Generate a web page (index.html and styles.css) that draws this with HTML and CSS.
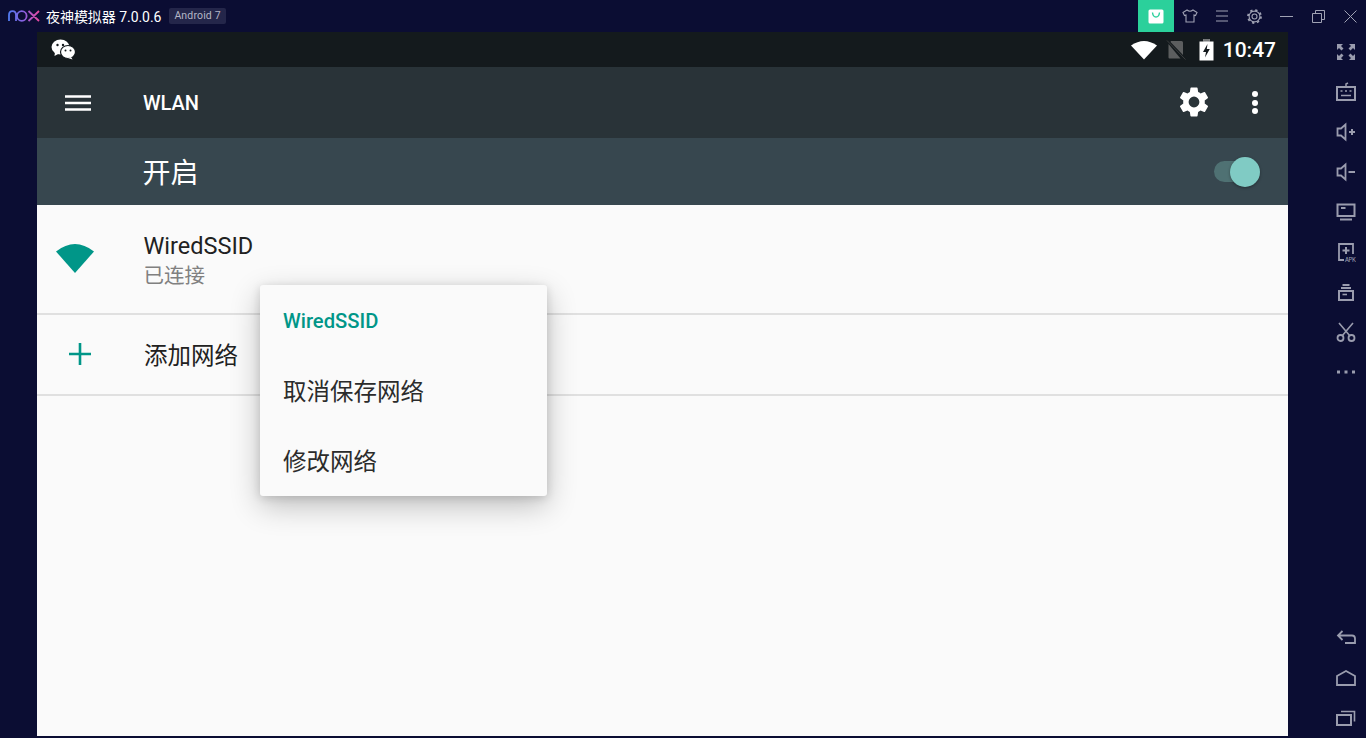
FILE: index.html

```html
<!DOCTYPE html>
<html>
<head>
    <title>夜神模拟器</title>
    <link rel="stylesheet" href="styles.css">
</head>
<body>
    <header class="titlebar">
        <div class="brand">
            <svg class="nox-logo" width="32" height="12" viewBox="0 0 32 12">
                <defs>
                    <linearGradient id="noxGrad" gradientUnits="userSpaceOnUse" x1="0" y1="0" x2="32" y2="0">
                        <stop offset="0" stop-color="#4f7bf0"/>
                        <stop offset="0.5" stop-color="#8a5fe0"/>
                        <stop offset="1" stop-color="#f0479c"/>
                    </linearGradient>
                </defs>
                <path d="M1 11V5Q1 1.200 4.500 1.200T8 5V11M13.800 1.200A4.800 4.800 0 1 1 13.800 10.800A4.800 4.800 0 1 1 13.800 1.200M20.500 1L31 11M31 1L20.500 11" fill="none" stroke="url(#noxGrad)" stroke-width="1.800"/>
            </svg>
            <span class="app-title">夜神模拟器 7.0.0.6</span>
            <span class="version-tag">Android 7</span>
        </div>
        <div class="window-tools">
            <div class="tool tool-shop">
                <svg width="16" height="15" viewBox="0 0 16 15"><rect x="0.500" y="0.500" width="15" height="14" rx="1.500" fill="#fff"/><path d="M4.500 3.500Q5 8 8 8T11.500 3.500" fill="none" stroke="#2bd09b" stroke-width="1.400"/></svg>
            </div>
            <div class="tool">
                <svg width="16" height="14" viewBox="0 0 16 14"><path d="M5 1L1 3.500L2.500 6.500L4 6V13H12V6L13.500 6.500L15 3.500L11 1Q8 3.500 5 1Z" fill="none" stroke="#a0a2b4" stroke-width="1.100"/></svg>
            </div>
            <div class="tool">
                <svg width="14" height="12" viewBox="0 0 14 12"><path d="M1 1H13M1 6H13M1 11H13" stroke="#a0a2b4" stroke-width="1"/></svg>
            </div>
            <div class="tool">
                <svg width="15" height="15" viewBox="0 0 15 15"><circle cx="7.500" cy="7.500" r="5.400" fill="none" stroke="#a0a2b4" stroke-width="1.100"/><circle cx="7.500" cy="7.500" r="6.500" fill="none" stroke="#a0a2b4" stroke-width="1.800" stroke-dasharray="2.300 2.800"/><circle cx="7.500" cy="7.500" r="2.500" fill="none" stroke="#a0a2b4" stroke-width="1.100"/></svg>
            </div>
            <div class="tool">
                <svg width="13" height="13" viewBox="0 0 13 13"><path d="M0 6.500H13" stroke="#a0a2b4" stroke-width="1"/></svg>
            </div>
            <div class="tool">
                <svg width="13" height="13" viewBox="0 0 13 13"><path d="M0.500 3.500H9.500V12.500H0.500ZM3.500 3.500V0.500H12.500V9.500H9.500" fill="none" stroke="#a0a2b4" stroke-width="1"/></svg>
            </div>
            <div class="tool">
                <svg width="13" height="13" viewBox="0 0 13 13"><path d="M0.500 0.500L12.500 12.500M12.500 0.500L0.500 12.500" stroke="#a0a2b4" stroke-width="1"/></svg>
            </div>
        </div>
    </header>

    <div class="workspace">
        <main class="screen">
            <div class="statusbar">
                <svg class="wechat" width="25" height="21" viewBox="0 0 25 21">
                    <ellipse cx="9.500" cy="8" rx="9" ry="7.500" fill="#fff"/>
                    <path d="M4 13L3.500 17L8 14.500Z" fill="#fff"/>
                    <ellipse cx="17" cy="13" rx="7.500" ry="6.500" fill="#fff" stroke="#141a1d" stroke-width="1.200"/>
                    <path d="M20 18L21.500 20.500L17 19Z" fill="#fff"/>
                    <circle cx="6.500" cy="6" r="1.200" fill="#141a1d"/>
                    <circle cx="12" cy="6" r="1.200" fill="#141a1d"/>
                    <circle cx="14.500" cy="11.500" r="1" fill="#141a1d"/>
                    <circle cx="19.500" cy="11.500" r="1" fill="#141a1d"/>
                </svg>
                <div class="status-right">
                    <svg class="wifi-status" width="26" height="20" viewBox="0 0 26 20"><path d="M0 5.500Q13 -3.500 26 5.500L13 19.500Z" fill="#fff"/></svg>
                    <svg class="no-sim" width="20" height="20" viewBox="0 0 20 20"><path d="M5 1H15.500Q17 1 17 2.500V15L4.500 2Z M2.500 4L14.500 18.500H3.500Q2.500 18.500 2.500 17.500Z" fill="#5c5e5f"/><path d="M1 0.500L19.500 19.500" stroke="#3a3d3e" stroke-width="1"/></svg>
                    <svg class="battery" width="15" height="22" viewBox="0 0 15 22"><path d="M4.500 0H10.500V2.500H14.500V21.500H0.500V2.500H4.500Z" fill="#fff"/><path d="M4.500 0H10.500V2.500H4.500Z" fill="#77797a"/><path d="M8.500 5L4 13H7L6 18.500L10.800 10H7.800Z" fill="#141a1d"/></svg>
                    <span class="clock">10:47</span>
                </div>
            </div>

            <div class="appbar">
                <svg class="menu-icon" width="28" height="18" viewBox="0 0 28 18"><path d="M1 2.500H27M1 9H27M1 15.500H27" stroke="#fff" stroke-width="2.600"/></svg>
                <span class="appbar-title">WLAN</span>
                <svg class="gear" width="36" height="36" viewBox="0 0 24 24"><path fill="#fff" d="M19.140 12.940c.04-.3.060-.61.060-.94 0-.32-.02-.64-.07-.94l2.030-1.580a.49.49 0 0 0 .12-.61l-1.920-3.320a.49.49 0 0 0-.59-.22l-2.390.96a7.030 7.030 0 0 0-1.620-.94l-.36-2.540a.48.48 0 0 0-.48-.41h-3.840a.48.48 0 0 0-.47.41l-.36 2.540c-.59.24-1.130.57-1.620.94l-2.390-.96a.49.49 0 0 0-.59.22L2.740 8.870a.48.48 0 0 0 .12.61l2.030 1.580c-.05.3-.09.63-.09.94s.02.64.07.94l-2.030 1.580a.49.49 0 0 0-.12.61l1.920 3.320c.12.22.37.29.59.22l2.390-.96c.5.38 1.030.7 1.620.94l.36 2.540c.05.24.24.41.48.41h3.840c.24 0 .44-.17.47-.41l.36-2.540c.59-.24 1.130-.56 1.620-.94l2.390.96c.22.08.47 0 .59-.22l1.920-3.320a.48.48 0 0 0-.12-.61l-2.010-1.580zM12 15.600A3.600 3.600 0 1 1 12 8.400a3.600 3.600 0 0 1 0 7.200z"/></svg>
                <span class="more-dots"><i></i><i></i><i></i></span>
            </div>

            <div class="switchbar">
                <span class="switch-label">开启</span>
                <span class="switch"><span class="switch-knob"></span></span>
            </div>

            <section class="wifi-list">
                <div class="wifi-row row-connected">
                    <span class="row-icon">
                        <svg width="38" height="29" viewBox="0 0 38 29"><path d="M0 7.500Q19 -7.500 38 7.500L19 29Z" fill="#009688"/></svg>
                    </span>
                    <div class="row-text">
                        <div class="row-name">WiredSSID</div>
                        <div class="row-sub">已连接</div>
                    </div>
                </div>
                <div class="wifi-row row-add">
                    <span class="row-icon">
                        <svg width="22" height="22" viewBox="0 0 22 22"><path d="M11 0V22M0 11H22" stroke="#009688" stroke-width="2.600"/></svg>
                    </span>
                    <div class="row-name">添加网络</div>
                </div>
            </section>

            <div class="context-menu">
                <div class="menu-head">WiredSSID</div>
                <div class="menu-item">取消保存网络</div>
                <div class="menu-item">修改网络</div>
            </div>
        </main>

        <aside class="siderail">
            <svg class="rail-icon" viewBox="0 0 20 20"><path d="M1 2H7L5 4L7.500 6.500L5.500 8.500L3 6L1 8ZM19 2H13L15 4L12.500 6.500L14.500 8.500L17 6L19 8ZM1 18H7L5 16L7.500 13.500L5.500 11.500L3 14L1 12ZM19 18H13L15 16L12.500 13.500L14.500 11.500L17 14L19 12Z" fill="#9a9cae"/></svg>
            <svg class="rail-icon" viewBox="0 0 20 20"><path d="M1 5H19V18H1Z" fill="none" stroke="#9a9cae" stroke-width="2"/><path d="M4.500 9H6.500M9 9H11M13.500 9H15.500M5 13.500H15M10 5V2L12 1" fill="none" stroke="#9a9cae" stroke-width="1.500"/></svg>
            <svg class="rail-icon" viewBox="0 0 20 20"><path d="M1.500 6.500H5L9.500 2.500V17.500L5 13.500H1.500Z" fill="none" stroke="#9a9cae" stroke-width="1.800"/><path d="M13 10H19M16 7V13" stroke="#9a9cae" stroke-width="2"/></svg>
            <svg class="rail-icon" viewBox="0 0 20 20"><path d="M1.500 6.500H5L9.500 2.500V17.500L5 13.500H1.500Z" fill="none" stroke="#9a9cae" stroke-width="1.800"/><path d="M12.500 10H19" stroke="#9a9cae" stroke-width="2"/></svg>
            <svg class="rail-icon" viewBox="0 0 20 20"><path d="M1.500 2.500H18.500V14H1.500Z" fill="none" stroke="#9a9cae" stroke-width="2"/><path d="M5 6H9.500M4 17.500H16" stroke="#9a9cae" stroke-width="2"/></svg>
            <svg class="rail-icon" viewBox="0 0 20 20"><path d="M8 18H3V2H17V12" fill="none" stroke="#9a9cae" stroke-width="1.800"/><path d="M10 5V12M6.500 8.500H13.500" stroke="#9a9cae" stroke-width="2"/><text class="apk-label" x="9" y="19.500" textLength="11">APK</text></svg>
            <svg class="rail-icon" viewBox="0 0 20 20"><path d="M3 9H17V18H3ZM5 6H15M6.500 3H13.500" fill="none" stroke="#9a9cae" stroke-width="2"/><path d="M6.500 12.500H11" stroke="#9a9cae" stroke-width="1.600"/></svg>
            <svg class="rail-icon" viewBox="0 0 20 20"><path d="M3 1L14 14M17 1L6 14" stroke="#9a9cae" stroke-width="1.600"/><circle cx="4.500" cy="16" r="3" fill="none" stroke="#9a9cae" stroke-width="1.800"/><circle cx="15.500" cy="16" r="3" fill="none" stroke="#9a9cae" stroke-width="1.800"/></svg>
            <svg class="rail-icon" viewBox="0 0 20 20"><path d="M1 10H4M8.500 10H11.500M16 10H19" stroke="#9a9cae" stroke-width="3"/></svg>
            <div class="rail-spacer"></div>
            <svg class="rail-icon" viewBox="0 0 20 20"><path d="M6.500 3L2 7.500L6.500 12M2 7.500H16Q19 7.500 19 10.500V15H9" fill="none" stroke="#9a9cae" stroke-width="1.800"/></svg>
            <svg class="rail-icon" viewBox="0 0 20 20"><path d="M1 8L10 3L19 8V17H1Z" fill="none" stroke="#9a9cae" stroke-width="1.800"/></svg>
            <svg class="rail-icon" viewBox="0 0 20 20"><path d="M1 7H15V17H1Z" fill="none" stroke="#9a9cae" stroke-width="2"/><path d="M5 3.500H18.500V13.500" fill="none" stroke="#9a9cae" stroke-width="1.600"/></svg>
        </aside>
    </div>
</body>
</html>
```

FILE: styles.css

```css
* {
    box-sizing: border-box;
}

html, body {
    height: 100%;
}

body {
    margin: 0;
    height: 738px;
    overflow: hidden;
    background-color: #0b0d33;
    font-family: Roboto, "Noto Sans CJK SC", sans-serif;
    display: flex;
    flex-direction: column;
}

.titlebar {
    height: 32px;
    display: flex;
    justify-content: space-between;
    flex-shrink: 0;
}

.brand {
    display: flex;
    align-items: center;
    padding-left: 8px;
}

.nox-logo {
    margin-right: 6px;
}

.app-title {
    color: #fff;
    font-size: 14px;
    letter-spacing: -0.05px;
}

.version-tag {
    margin-left: 8px;
    padding: 0 5px;
    height: 16px;
    line-height: 16px;
    font-size: 10.500px;
    letter-spacing: 0.150px;
    color: #b4b6c6;
    background-color: #24264a;
    border-radius: 2px;
}

.window-tools {
    display: flex;
}

.tool {
    width: 32px;
    height: 32px;
    display: flex;
    align-items: center;
    justify-content: center;
}

.tool-shop {
    width: 36px;
    background-color: #2bd09b;
}

.workspace {
    flex: 1;
    display: flex;
    padding-left: 37px;
    min-height: 0;
}

.screen {
    position: relative;
    width: 1251px;
    height: 704px;
    background-color: #fafafa;
    display: flex;
    flex-direction: column;
}

.statusbar {
    height: 35px;
    background-color: #141a1d;
    display: flex;
    align-items: center;
    justify-content: space-between;
    padding: 0 12px 0 14px;
}

.status-right {
    display: flex;
    align-items: center;
}

.no-sim {
    margin-left: 9px;
}

.battery {
    margin-left: 13px;
}

.clock {
    margin-left: 9px;
    color: #fff;
    font-size: 21px;
    font-weight: 500;
    line-height: 24px;
}

.appbar {
    height: 71px;
    background-color: #293338;
    display: flex;
    align-items: center;
    padding: 0 30px 0 27px;
}

.appbar-title {
    flex: 1;
    margin-left: 51px;
    color: #fff;
    font-size: 20px;
    font-weight: 500;
}

.gear {
    margin-right: 40px;
    margin-bottom: 2px;
}

.more-dots {
    display: flex;
    flex-direction: column;
    gap: 2.500px;
}

.more-dots i {
    width: 6px;
    height: 6px;
    border-radius: 50%;
    background-color: #fff;
}

.switchbar {
    height: 67px;
    background-color: #37474f;
    display: flex;
    align-items: center;
    justify-content: space-between;
    padding: 0 28px 2px 105.500px;
}

.switch-label {
    color: #fff;
    font-size: 28px;
}

.switch {
    position: relative;
    width: 45px;
    height: 21px;
    border-radius: 11px;
    background-color: #4f7173;
    margin-right: 1px;
    margin-top: 2px;
}

.switch-knob {
    position: absolute;
    right: -1px;
    top: -4px;
    width: 30px;
    height: 30px;
    border-radius: 50%;
    background-color: #80cbc4;
    box-shadow: 0 1px 3px rgba(0, 0, 0, 0.35);
}

.wifi-row {
    display: flex;
    align-items: center;
    border-bottom: 2px solid #e0e0e0;
}

.row-connected {
    height: 110px;
}

.row-connected .row-icon {
    padding-bottom: 2px;
}

.row-connected .row-text {
    padding-top: 5px;
    margin-left: -0.500px;
}

.row-add {
    height: 81px;
}

.row-icon {
    width: 107px;
    flex-shrink: 0;
    display: flex;
    justify-content: center;
    padding-right: 32px;
}

.row-add .row-icon {
    padding-right: 22px;
    padding-bottom: 2px;
}

.row-name {
    font-size: 23.500px;
    line-height: 30px;
    color: #212121;
}

.row-add .row-name {
    padding-top: 2px;
}

.row-sub {
    font-size: 20.500px;
    line-height: 31px;
    color: #808080;
}

.context-menu {
    position: absolute;
    left: 223px;
    top: 253px;
    width: 287px;
    height: 211px;
    background-color: #fafafa;
    border-radius: 3px;
    box-shadow: 0 10px 30px rgba(0, 0, 0, 0.24), 0 2px 10px rgba(0, 0, 0, 0.14);
    padding: 1px 0 0 23px;
}

.menu-head {
    height: 71px;
    line-height: 71px;
    color: #009688;
    font-size: 20.200px;
    font-weight: 500;
}

.menu-item {
    height: 70px;
    line-height: 70px;
    font-size: 23.500px;
    color: #2b2b2b;
}

.siderail {
    width: 78px;
    height: 706px;
    display: flex;
    flex-direction: column;
    align-items: flex-end;
    gap: 20px;
    padding: 10px 10px 10px 0;
}

.rail-icon {
    width: 20px;
    height: 20px;
    flex-shrink: 0;
}

.apk-label {
    font-family: "Liberation Mono", monospace;
    font-size: 6.500px;
    fill: #9a9cae;
}

.rail-spacer {
    flex: 1;
}
```
